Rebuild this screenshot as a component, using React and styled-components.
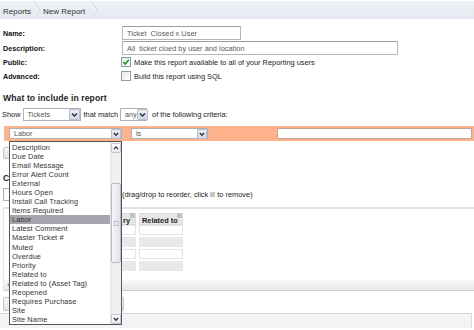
import React from 'react';
import styled, { createGlobalStyle } from 'styled-components';

const Global = createGlobalStyle`
  html, body { margin: 0; padding: 0; background: #fff; }
  body {
    width: 474px; height: 330px; overflow: hidden;
    font-family: "Liberation Sans", Arial, sans-serif;
    font-size: 7.4px; color: #222;
  }
  #root { width: 474px; height: 330px; }
  * { box-sizing: border-box; }
`;

const Page = styled.div`
  position: relative;
  width: 474px;
  height: 330px;
  overflow: hidden;
`;

/* ---------- breadcrumb ---------- */
const Crumbs = styled.nav`
  display: flex;
  align-items: stretch;
  height: 18px;
  margin-top: 1px;
  background: linear-gradient(#edf1f6, #e5eaf1);
  font-size: 8px;
  color: #333;
  padding-left: 3px;
`;
const Crumb = styled.span`
  display: flex;
  align-items: center;
  padding-top: 2px;
  margin-right: ${p => p.$gap}px;
`;
const Sep = styled.svg`
  width: 8px;
  height: 18px;
  margin-right: ${p => p.$gap}px;
  flex: none;
`;

/* ---------- form ---------- */
const Form = styled.div`
  display: flex;
  flex-direction: column;
  margin-top: 7px;
  padding-left: 3px;
`;
const Row = styled.div`
  display: flex;
  align-items: center;
  height: 14px;
  margin-bottom: ${p => p.$mb || 0}px;
`;
const Label = styled.span`
  width: 119px;
  flex: none;
  font-weight: bold;
  font-size: 7.2px;
  color: #111;
`;
const TextInput = styled.input`
  width: ${p => p.$w}px;
  height: ${p => p.$h || 14}px;
  border: 1px solid ${p => p.$border || '#b3b6ba'};
  border-top-color: ${p => p.$border || '#9a9ea4'};
  background: #fff;
  padding: 0 0 0 4px;
  margin: 0;
  font-family: inherit;
  font-size: 7.4px;
  color: #5a5a5a;
  outline: none;
  white-space: pre;
`;
const Check = styled.span`
  display: inline-flex;
  width: 10px;
  height: 10px;
  margin-left: -1px;
  margin-right: 3px;
  border: 1px solid #8e9caf;
  background: linear-gradient(135deg, #e7eaee, #ffffff);
  align-items: center;
  justify-content: center;
`;
const CheckText = styled.span`
  color: #222;
`;

/* ---------- heading ---------- */
const Heading = styled.h2`
  margin: ${p => p.$mt}px 0 0 0;
  padding-left: ${p => p.$pl ?? 3}px;
  font-size: 8.6px;
  line-height: 11px;
  height: 11px;
  font-weight: bold;
  color: #1e1e1e;
  letter-spacing: 0.1px;
  white-space: nowrap;
`;

/* ---------- show row ---------- */
const ShowRow = styled.div`
  display: flex;
  align-items: center;
  height: 13px;
  margin-top: 4px;
  padding-left: 2px;
  color: #222;
`;
const Txt = styled.span`
  margin-right: ${p => p.$mr || 0}px;
  white-space: nowrap;
`;
const Select = styled.div`
  position: relative;
  display: flex;
  align-items: center;
  flex: none;
  width: ${p => p.$w}px;
  height: ${p => p.$h}px;
  margin-right: ${p => p.$mr || 0}px;
  border: 1px solid #aeb2b8;
  background: #fff;
  padding-left: 4px;
  color: #555;
  font-size: 7.2px;
`;
const SelText = styled.span`
  flex: 1;
  white-space: nowrap;
`;
const Arrow = styled.span`
  display: flex;
  align-items: center;
  justify-content: center;
  flex: none;
  width: ${p => p.$s}px;
  height: ${p => p.$s}px;
  border: 1px solid #b7bfcf;
  border-radius: 1px;
  background: linear-gradient(#eceef4, #d3d8e3);
`;

/* ---------- criteria bar ---------- */
const Criteria = styled.div`
  display: flex;
  align-items: center;
  height: 15px;
  margin: 5px 0 0 4px;
  padding-left: 5px;
  background: #ffb38c;
`;

/* ---------- lower section ---------- */
const Lower = styled.div`
  display: flex;
  flex-direction: column;
  padding-left: 3px;
`;
const Button = styled.div`
  width: ${p => p.$w}px;
  height: ${p => p.$h}px;
  margin-top: ${p => p.$mt}px;
  border: 1px solid #c3c3c3;
  border-radius: 2px;
  background: linear-gradient(#f7f7f7, #e4e4e4);
`;
const ColRow = styled.div`
  display: flex;
  align-items: center;
  height: 13px;
  margin-top: 4px;
  color: #222;
`;
const Panel = styled.div`
  display: flex;
  flex-direction: column;
  height: 84px;
  margin-top: 6px;
  border-top: 2px solid #e3e3e3;
  border-left: 1px solid #e6e6e6;
`;
const Table = styled.div`
  display: grid;
  grid-template-columns: 41px 39px 41px 44px;
  column-gap: 3px;
  row-gap: 2px;
  padding: 4px 0 0 5px;
  grid-auto-rows: 10px;
`;
const HeadCell = styled.div`
  position: relative;
  height: 12px;
  margin-bottom: 1px;
  background: #e7e7e7;
  border: 1px solid #dcdcdc;
  font-weight: bold;
  font-size: 7.4px;
  color: #1e1e1e;
  padding: 2px 0 0 2px;
  white-space: nowrap;
`;
const Close = styled.svg`
  position: ${p => (p.$inline ? 'static' : 'absolute')};
  top: -1px;
  right: 0px;
  width: 5px;
  height: 5px;
  vertical-align: middle;
  margin: ${p => (p.$inline ? '0 2px' : '0')};
`;
const Cell = styled.div`
  background: ${p => (p.$alt ? '#e9e9e9' : '#fff')};
  border: 1px solid ${p => (p.$alt ? '#e9e9e9' : '#e3e3e3')};
`;
const HScroll = styled.div`
  margin-top: auto;
  height: 11px;
  background: linear-gradient(#f8f8f8, #e8e8e8);
  border-bottom: 1px solid #cbcbcb;
  display: flex;
  align-items: center;
  padding-left: 2px;
`;
const Footer = styled.div`
  width: 472px;
  height: 15px;
  margin-top: 2px;
  margin-left: -3px;
  border-top: 1px solid #d6d6d6;
  border-right: 1px solid #dcdcdc;
  background: #f3f3f3;
`;

/* ---------- dropdown overlay ---------- */
const Drop = styled.div`
  position: absolute;
  left: 9px;
  top: 141px;
  width: 113px;
  height: 184px;
  border: 1px solid #555;
  background: #fff;
  display: flex;
`;
const List = styled.ul`
  flex: 1;
  margin: 0;
  padding: 1px 0 0 0;
  list-style: none;
  overflow: hidden;
`;
const Item = styled.li`
  height: 9.05px;
  line-height: 9px;
  padding-left: 2px;
  font-size: 7.4px;
  letter-spacing: 0.1px;
  color: #333;
  white-space: nowrap;
  background: ${p => (p.$sel ? '#a5a5ad' : 'transparent')};
`;
const VScroll = styled.div`
  width: 11px;
  flex: none;
  display: flex;
  flex-direction: column;
  background: #f0f0f3;
  border-left: 1px solid #e6e6ea;
`;
const SBtn = styled.div`
  height: 10px;
  flex: none;
  margin-top: 1px;
  border: 1px solid #c4c8d2;
  border-radius: 1px;
  background: linear-gradient(#fbfbfd, #e6e8ee);
  display: flex;
  align-items: center;
  justify-content: center;
`;
const Thumb = styled.div`
  height: 80px;
  margin-top: 30px;
  margin-bottom: auto;
  border: 1px solid #b8bbc7;
  border-radius: 2px;
  background: linear-gradient(90deg, #f6f6f9, #e2e3ea);
  display: flex;
  align-items: center;
  justify-content: center;
`;

const Chevron = ({ up, size = 7 }) => (
  <svg width={size} height={size} viewBox="0 0 7 7">
    <polyline
      points={up ? '1,4.8 3.5,2.2 6,4.8' : '1,2.4 3.5,5 6,2.4'}
      fill="none"
      stroke="#2d3647"
      strokeWidth="1.5"
    />
  </svg>
);

const X = ({ inline }) => (
  <Close $inline={inline} viewBox="0 0 5 5">
    <rect x="0.25" y="0.25" width="4.5" height="4.5" fill="#d9d9d9" stroke="#b5b5b5" strokeWidth="0.5" />
    <path d="M1.3 1.3 L3.7 3.7 M3.7 1.3 L1.3 3.7" stroke="#8a8a8a" strokeWidth="0.7" />
  </Close>
);

const SepIcon = ({ gap }) => (
  <Sep $gap={gap} viewBox="0 0 8 18">
    <polyline points="0.5,0 7,9 0.5,18" fill="none" stroke="#cdd4dd" strokeWidth="1" />
    <polyline points="-0.5,0 6,9 -0.5,18" fill="none" stroke="#f8fafc" strokeWidth="0.8" />
  </Sep>
);

const items = [
  'Description', 'Due Date', 'Email Message', 'Error Alert Count', 'External',
  'Hours Open', 'Install Call Tracking', 'Items Required', 'Labor', 'Latest Comment',
  'Master Ticket #', 'Muted', 'Overdue', 'Priority', 'Related to',
  'Related to (Asset Tag)', 'Reopened', 'Requires Purchase', 'Site', 'Site Name',
];

const columns = [
  { key: 'a', label: '' },
  { key: 'b', label: '' },
  { key: 'c', label: 'ry' , right: true },
  { key: 'd', label: 'Related to' },
];

const HeadText = styled.span`
  display: block;
  text-align: ${p => (p.$right ? 'right' : 'left')};
  padding-right: ${p => (p.$right ? 5 : 0)}px;
`;

export default function App() {
  return (
    <Page>
      <Global />
      <Crumbs>
        <Crumb $gap={2}>Reports</Crumb>
        <SepIcon gap={2} />
        <Crumb $gap={5}>New Report</Crumb>
        <SepIcon gap={0} />
      </Crumbs>

      <Form>
        <Row $mb={1}>
          <Label>Name:</Label>
          <TextInput $w={119} readOnly value="Ticket  Closed x User" />
        </Row>
        <Row>
          <Label>Description:</Label>
          <TextInput $w={276} readOnly value="All  ticket cloed by user and location" />
        </Row>
        <Row>
          <Label>Public:</Label>
          <Check>
            <svg width="8" height="8" viewBox="0 0 8 8">
              <polyline points="1.3,4 3.2,6 6.8,1.8" fill="none" stroke="#1e9a1e" strokeWidth="1.6" />
            </svg>
          </Check>
          <CheckText>Make this report available to all of your Reporting users</CheckText>
        </Row>
        <Row>
          <Label>Advanced:</Label>
          <Check />
          <CheckText>Build this report using SQL</CheckText>
        </Row>
      </Form>

      <Heading $mt={10}>What to include in report</Heading>

      <ShowRow>
        <Txt $mr={2}>Show</Txt>
        <Select $w={58} $h={13} $mr={3}>
          <SelText>Tickets</SelText>
          <Arrow $s={11}><Chevron /></Arrow>
        </Select>
        <Txt $mr={2}>that match</Txt>
        <Select $w={27} $h={13} $mr={5}>
          <SelText>any</SelText>
          <Arrow $s={11}><Chevron /></Arrow>
        </Select>
        <Txt>of the following criteria:</Txt>
      </ShowRow>

      <Criteria>
        <Select $w={113} $h={11} $mr={9}>
          <SelText>Labor</SelText>
          <Arrow $s={10}><Chevron size={6} /></Arrow>
        </Select>
        <Select $w={77} $h={11} $mr={69}>
          <SelText>is</SelText>
          <Arrow $s={10}><Chevron size={6} /></Arrow>
        </Select>
        <TextInput $w={195} $h={11} $border="#c7a497" readOnly value="" />
      </Criteria>

      <Lower>
        <Button $w={60} $h={12} $mt={6} />
        <Heading $mt={14} $pl={0}>C</Heading>
        <ColRow>
          <Select $w={112} $h={13} $mr={7}>
            <SelText />
            <Arrow $s={11}><Chevron /></Arrow>
          </Select>
          <Txt>(drag/drop to reorder, click</Txt>
          <X inline />
          <Txt>to remove)</Txt>
        </ColRow>
        <Panel>
          <Table>
            {columns.map(c => (
              <HeadCell key={c.key}>
                <HeadText $right={c.right}>{c.label}</HeadText>
                <X />
              </HeadCell>
            ))}
            {[0, 1, 2, 3].map(r =>
              columns.map(c => <Cell key={c.key + r} $alt={r % 2 === 1} />)
            )}
          </Table>
          <HScroll>
            <svg width="5" height="6" viewBox="0 0 5 6">
              <polygon points="4,0.5 1,3 4,5.5" fill="#9a9a9a" />
            </svg>
          </HScroll>
        </Panel>
        <Button $w={121} $h={14} $mt={6} />
        <Footer />
      </Lower>

      <Drop>
        <List>
          {items.map(it => (
            <Item key={it} $sel={it === 'Labor'}>{it}</Item>
          ))}
        </List>
        <VScroll>
          <SBtn><Chevron up size={6} /></SBtn>
          <Thumb>
            <svg width="5" height="5" viewBox="0 0 5 5">
              <rect x="0.5" y="0.5" width="4" height="4" fill="none" stroke="#b0b3bd" strokeWidth="0.8" />
            </svg>
          </Thumb>
          <SBtn><Chevron size={6} /></SBtn>
        </VScroll>
      </Drop>
    </Page>
  );
}
